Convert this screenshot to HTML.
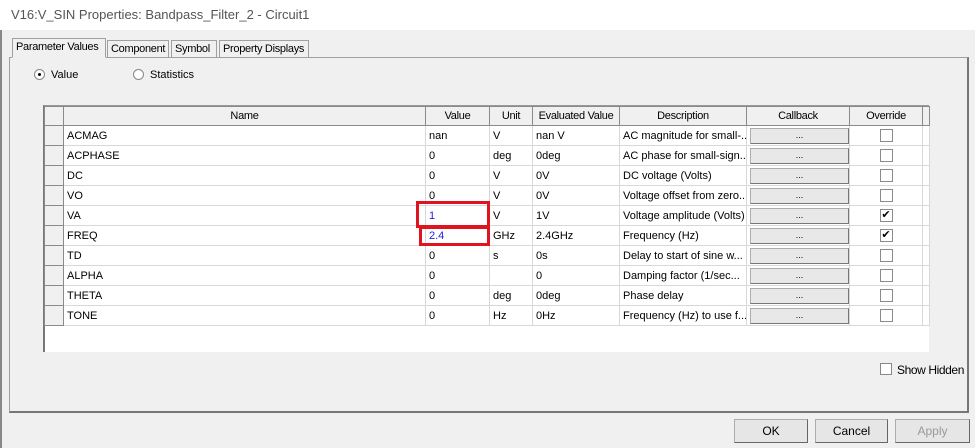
<!DOCTYPE html>
<html><head><style>
*{box-sizing:border-box;margin:0;padding:0}
body{width:975px;height:448px;background:#f0f0f0;font-family:"Liberation Sans",sans-serif;font-size:11px;color:#000;position:relative;overflow:hidden}
.a{position:absolute;white-space:nowrap}
.title{left:0;top:0;width:975px;height:30px;background:#fff;}
.title span{position:absolute;left:11px;top:7px;font-size:13px;color:#555}
.tab{top:40px;height:17px;border:1px solid #a0a0a0;border-bottom:none;background:#f0f0f0;padding:2px 3px;font-size:11px;letter-spacing:-0.3px}
.panel{left:9px;top:57px;width:960px;height:356px;border:1px solid #a0a0a0;border-right:2px solid #777;border-bottom:2px solid #777}
table{border-collapse:collapse;position:absolute;left:44px;top:106px;background:#fff;table-layout:fixed;width:885px}
td{height:20px;border:1px solid #d8d8d8;padding:0 3px;white-space:nowrap;overflow:hidden;font-size:11px}
th{height:19px;background:#f0f0f0;border:1px solid #8a8a8a;font-weight:normal;font-size:11px;white-space:nowrap;overflow:hidden;letter-spacing:-0.3px}
td.rh{background:#f0f0f0;border:1px solid #8a8a8a}
.btn{display:block;margin:0 auto;width:99px;height:16px;border:1px solid #adadad;border-right-color:#777;border-bottom-color:#777;background:#e8e8e8;text-align:center;line-height:12px;font-size:9px}
.cb{display:block;margin:0 auto;width:13px;height:13px;border:1px solid #8a8a8a;background:#fff;font-size:11px;line-height:11px;text-align:center}
.blue{color:#2020e0}
.red{border:3px solid #e0141e}
.pb{height:24px;border:1px solid #adadad;border-right-color:#666;border-bottom-color:#666;background:#e6e6e6;text-align:center;line-height:22px;font-size:12px}
</style></head><body>
<div class="a" style="left:0;top:30px;width:2px;height:418px;background:#888"></div>
<div class="a title"><span>V16:V_SIN Properties: Bandpass_Filter_2 - Circuit1</span></div>
<div class="a panel"></div>
<div class="a tab" style="left:12px;top:38px;height:20px;width:94px;border-bottom:1px solid #f0f0f0">Parameter Values</div>
<div class="a tab" style="left:107px;width:62px">Component</div>
<div class="a tab" style="left:171px;width:46px">Symbol</div>
<div class="a tab" style="left:219px;width:90px">Property Displays</div>
<div class="a" style="left:34px;top:69px;width:11px;height:11px;border-radius:50%;border:1px solid #888;background:#fff"><div style="margin:3px;width:3px;height:3px;background:#000;border-radius:50%"></div></div>
<div class="a" style="left:51px;top:69px">Value</div>
<div class="a" style="left:133px;top:69px;width:11px;height:11px;border-radius:50%;border:1px solid #888;background:#fff"></div>
<div class="a" style="left:150px;top:69px">Statistics</div>
<div class="a" style="left:43px;top:105px;width:886px;height:247px;background:#fff;border-left:2px solid #777;border-top:1px solid #999"></div>
<table>
<colgroup><col style="width:19px"><col style="width:362px"><col style="width:64px"><col style="width:43px"><col style="width:87px"><col style="width:127px"><col style="width:103px"><col style="width:73px"><col style="width:7px"></colgroup>
<tr><th></th><th>Name</th><th>Value</th><th>Unit</th><th>Evaluated Value</th><th>Description</th><th>Callback</th><th>Override</th><th></th></tr>
<tr><td class="rh"></td><td>ACMAG</td><td>nan</td><td>V</td><td>nan V</td><td>AC magnitude for small-...</td><td><span class="btn">...</span></td><td><span class="cb"></span></td><td></td></tr>
<tr><td class="rh"></td><td>ACPHASE</td><td>0</td><td>deg</td><td>0deg</td><td>AC phase for small-sign...</td><td><span class="btn">...</span></td><td><span class="cb"></span></td><td></td></tr>
<tr><td class="rh"></td><td>DC</td><td>0</td><td>V</td><td>0V</td><td>DC voltage (Volts)</td><td><span class="btn">...</span></td><td><span class="cb"></span></td><td></td></tr>
<tr><td class="rh"></td><td>VO</td><td>0</td><td>V</td><td>0V</td><td>Voltage offset from zero...</td><td><span class="btn">...</span></td><td><span class="cb"></span></td><td></td></tr>
<tr><td class="rh"></td><td>VA</td><td class="blue">1</td><td>V</td><td>1V</td><td>Voltage amplitude (Volts)</td><td><span class="btn">...</span></td><td><span class="cb">✔</span></td><td></td></tr>
<tr><td class="rh"></td><td>FREQ</td><td class="blue">2.4</td><td>GHz</td><td>2.4GHz</td><td>Frequency (Hz)</td><td><span class="btn">...</span></td><td><span class="cb">✔</span></td><td></td></tr>
<tr><td class="rh"></td><td>TD</td><td>0</td><td>s</td><td>0s</td><td>Delay to start of sine w...</td><td><span class="btn">...</span></td><td><span class="cb"></span></td><td></td></tr>
<tr><td class="rh"></td><td>ALPHA</td><td>0</td><td></td><td>0</td><td>Damping factor (1/sec...</td><td><span class="btn">...</span></td><td><span class="cb"></span></td><td></td></tr>
<tr><td class="rh"></td><td>THETA</td><td>0</td><td>deg</td><td>0deg</td><td>Phase delay</td><td><span class="btn">...</span></td><td><span class="cb"></span></td><td></td></tr>
<tr><td class="rh"></td><td>TONE</td><td>0</td><td>Hz</td><td>0Hz</td><td>Frequency (Hz) to use f...</td><td><span class="btn">...</span></td><td><span class="cb"></span></td><td></td></tr>
</table>
<div class="a red" style="left:416px;top:201px;width:74px;height:27px"></div>
<div class="a red" style="left:419px;top:226px;width:71px;height:20px"></div>
<div class="a" style="left:880px;top:363px;width:12px;height:12px;border:1px solid #888;background:#fff"></div>
<div class="a" style="left:897px;top:363px;font-size:12px;letter-spacing:-0.4px">Show Hidden</div>
<div class="a pb" style="left:734px;top:419px;width:74px">OK</div>
<div class="a pb" style="left:815px;top:419px;width:73px">Cancel</div>
<div class="a pb" style="left:895px;top:419px;width:75px;color:#999">Apply</div>
</body></html>
